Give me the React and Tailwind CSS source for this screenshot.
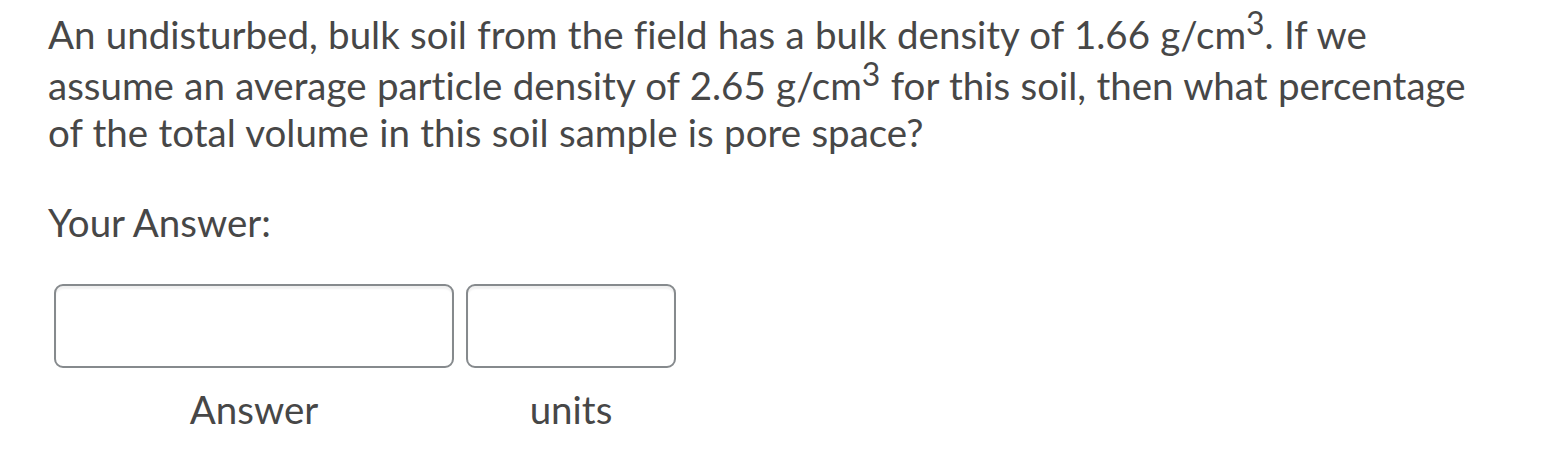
import React from 'react';

function Sup({ children }) {
  return <span className="align-super text-[0.83em] leading-none">{children}</span>;
}

export default function App() {
  return (
    <div className="bg-white min-h-screen w-full pl-[48px] pt-[7px] text-[#474747] font-['Lato',sans-serif] text-[38.5px] leading-[47px] [font-variant-ligatures:none]">
      {/* Question */}
      <p className="w-[1490px] [word-spacing:0.5px]">
        An undisturbed, bulk soil from the field has a bulk density of 1.66 g/cm<Sup>3</Sup>. If we
        <br />
        assume an average particle density of 2.65 g/cm<Sup>3</Sup> for this soil, then what percentage
        <br />
        of the total volume in this soil sample is pore space?
      </p>

      <p className="mt-[43px]">Your Answer:</p>

      {/* Answer inputs */}
      <div className="flex gap-[12px] mt-[38px] ml-[6px]">
        <div className="flex flex-col items-center w-[400px]">
          <input
            type="text"
            className="w-full h-[84px] rounded-[9px] border-2 border-[#868a8d] bg-white shadow-[inset_0_3px_2px_rgba(0,0,0,0.06)] outline-none"
          />
          <span className="mt-[18px]">Answer</span>
        </div>
        <div className="flex flex-col items-center w-[210px]">
          <input
            type="text"
            className="w-full h-[84px] rounded-[9px] border-2 border-[#868a8d] bg-white shadow-[inset_0_3px_2px_rgba(0,0,0,0.06)] outline-none"
          />
          <span className="mt-[18px]">units</span>
        </div>
      </div>
    </div>
  );
}
